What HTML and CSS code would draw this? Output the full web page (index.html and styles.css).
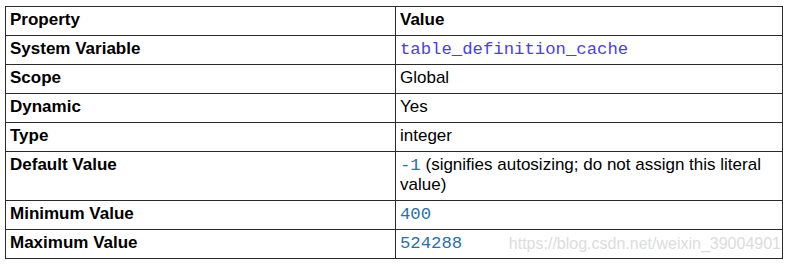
FILE: index.html
```html
<!DOCTYPE html>
<html lang="en">
<head>
    <meta charset="UTF-8" />
    <title>table_definition_cache</title>
    <link rel="stylesheet" href="styles.css">
</head>
<body>
    <table class="props">
        <colgroup>
            <col class="col-name">
            <col class="col-value">
        </colgroup>
        <tr>
            <th>Property</th>
            <th>Value</th>
        </tr>
        <tr>
            <th>System Variable</th>
            <td><code class="var">table_definition_cache</code></td>
        </tr>
        <tr>
            <th>Scope</th>
            <td>Global</td>
        </tr>
        <tr>
            <th>Dynamic</th>
            <td>Yes</td>
        </tr>
        <tr>
            <th>Type</th>
            <td>integer</td>
        </tr>
        <tr>
            <th>Default Value</th>
            <td><code class="num">-1</code> (signifies autosizing; do not assign this literal value)</td>
        </tr>
        <tr>
            <th>Minimum Value</th>
            <td><code class="num">400</code></td>
        </tr>
        <tr>
            <th>Maximum Value</th>
            <td class="last"><code class="num">524288</code><span class="mark">https://blog.csdn.net/weixin_39004901</span></td>
        </tr>
    </table>
</body>
</html>
```

FILE: styles.css
```css
html, body {
    margin: 0;
    padding: 0;
    background: #fff;
}

body {
    padding: 6px 0 0 5px;
    font-family: 'Liberation Sans', Arial, sans-serif;
    color: #000;
}

.props {
    border-collapse: collapse;
    table-layout: fixed;
    width: 777px;
    font-size: 17px;
    line-height: 20px;
}

.col-name {
    width: 390px;
}

.col-value {
    width: 387px;
}

.props th, .props td {
    border: 1px solid #2b2b2b;
    padding: 3px 8px 5px 4px;
    text-align: left;
    vertical-align: top;
}

.props th {
    font-weight: bold;
}

code {
    font-family: 'Liberation Mono', 'Courier New', monospace;
    font-size: 17.3px;
    line-height: 1;
}

.var {
    color: #4a3cf2;
}

.num {
    color: #2a70a8;
}

.last {
    position: relative;
}

.mark {
    position: absolute;
    right: 1px;
    top: 4px;
    font-size: 16px;
    color: #dcdcdc;
    white-space: nowrap;
}
```
